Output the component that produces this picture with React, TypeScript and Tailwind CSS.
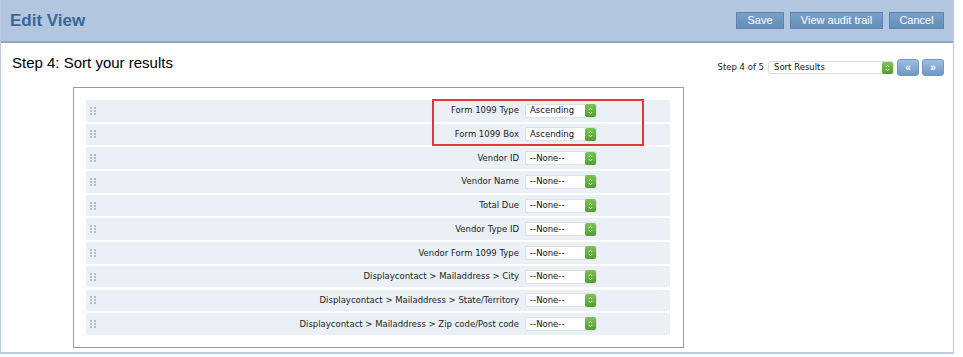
import React from "react";

const rows: { label: string; value: string }[] = [
  { label: "Form 1099 Type", value: "Ascending" },
  { label: "Form 1099 Box", value: "Ascending" },
  { label: "Vendor ID", value: "--None--" },
  { label: "Vendor Name", value: "--None--" },
  { label: "Total Due", value: "--None--" },
  { label: "Vendor Type ID", value: "--None--" },
  { label: "Vendor Form 1099 Type", value: "--None--" },
  { label: "Displaycontact > Mailaddress > City", value: "--None--" },
  { label: "Displaycontact > Mailaddress > State/Territory", value: "--None--" },
  { label: "Displaycontact > Mailaddress > Zip code/Post code", value: "--None--" },
];

const Spinner = ({ h }: { h: string }) => (
  <span
    className={`flex w-[11px] ${h} items-center justify-center rounded-[2px] bg-gradient-to-b from-[#7cc455] to-[#4f9e2c]`}
  >
    <svg width="5" height="8" viewBox="0 0 5 8" fill="none">
      <path d="M0.8 3 L2.5 1.2 L4.2 3" stroke="white" strokeWidth="0.9" />
      <path d="M0.8 5 L2.5 6.8 L4.2 5" stroke="white" strokeWidth="0.9" />
    </svg>
  </span>
);

const DragHandle = () => (
  <svg width="6" height="8" viewBox="0 0 6 8" className="ml-[4px]">
    {[0, 3, 6].map((y) =>
      [0, 4].map((x) => (
        <rect key={`${x}-${y}`} x={x} y={y} width="2" height="2" fill="#b9bcc2" />
      ))
    )}
  </svg>
);

const HeaderButton = ({ label, w }: { label: string; w: string }) => (
  <button
    className={`${w} h-[17px] border border-[#5d84b1] bg-gradient-to-b from-[#7aa0ca] to-[#668db9] text-[11px] leading-none text-white`}
  >
    {label}
  </button>
);

const NavButton = ({ glyph }: { glyph: string }) => (
  <button className="flex h-[17px] w-[22px] items-center justify-center rounded-[3px] border border-[#7397c2] bg-gradient-to-b from-[#9dbfe4] to-[#6f98c8] text-[10px] font-bold leading-none text-white">
    {glyph}
  </button>
);

export default function App() {
  return (
    <div className="h-[357px] w-[963px] bg-white font-['Liberation_Sans',Arial,sans-serif]">
      <div className="flex h-[354px] w-[954px] flex-col border-x border-b-2 border-[#bccbdd]">
        <div className="flex h-[43px] items-center justify-between border-b-2 border-[#8ea6c4] bg-[#b2c6df] pl-[9px] pr-[9px]">
          <h1 className="text-[17px] font-bold text-[#3b6696]">Edit View</h1>
          <div className="flex gap-[6px]">
            <HeaderButton label="Save" w="w-[48px]" />
            <HeaderButton label="View audit trail" w="w-[93px]" />
            <HeaderButton label="Cancel" w="w-[55px]" />
          </div>
        </div>
        <div className="flex-1">
          <div className="flex h-[44px] items-start justify-between pl-[11px] pr-[9px]">
            <h2 className="mt-[9px] text-[15px] text-black">Step 4: Sort your results</h2>
            <div className="mt-[16px] flex items-center gap-[3px]">
              <span className="mr-[1px] font-['DejaVu_Sans',sans-serif] text-[8.5px] text-[#222]">
                Step 4 of 5
              </span>
              <div className="flex h-[13px] w-[126px] items-center justify-between rounded-[2px] border border-[#dcdcdc] bg-white">
                <span className="pl-[5px] font-['DejaVu_Sans',sans-serif] text-[8.5px] text-[#111]">
                  Sort Results
                </span>
                <Spinner h="h-[12px]" />
              </div>
              <NavButton glyph="«" />
              <NavButton glyph="»" />
            </div>
          </div>
          <div className="relative ml-[72px] w-[611px] border border-[#9a9a9a] px-[12px] pb-[12px] pt-[12px]">
            <div className="flex w-[584px] flex-col gap-[2.2px]">
              {rows.map((r) => (
                <div
                  key={r.label}
                  className="flex h-[21.5px] items-center justify-between bg-[#ebf0f7] pr-[73px]"
                >
                  <DragHandle />
                  <div className="flex items-center gap-[6px]">
                    <span className="font-['DejaVu_Sans',sans-serif] text-[8.5px] text-[#222]">
                      {r.label}
                    </span>
                    <div className="flex h-[14px] w-[72px] items-center justify-between rounded-[2px] border border-[#e0e0e0] bg-white">
                      <span className="pl-[4px] font-['DejaVu_Sans',sans-serif] text-[8.5px] text-[#111]">
                        {r.value}
                      </span>
                      <Spinner h="h-[13px]" />
                    </div>
                  </div>
                </div>
              ))}
            </div>
            <div className="absolute left-[358px] top-[11px] h-[47px] w-[212px] border-2 border-[#e2363f]" />
          </div>
        </div>
      </div>
    </div>
  );
}
